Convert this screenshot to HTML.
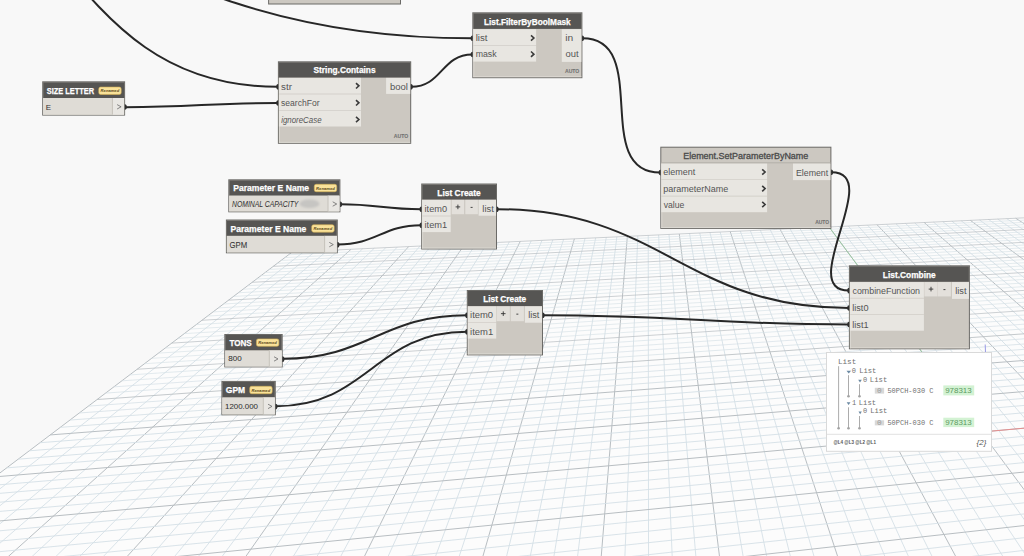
<!DOCTYPE html><html><head><meta charset="utf-8"><style>html,body{margin:0;padding:0;width:1024px;height:556px;overflow:hidden;background:#f8f8f8}svg{display:block}</style></head><body><svg width="1024" height="556" viewBox="0 0 1024 556">
<rect x="0.00" y="0.00" width="1024.00" height="556.00" fill="#f8f8f8" />
<defs><filter id="gb" x="0" y="0" width="1024" height="556" filterUnits="userSpaceOnUse"><feGaussianBlur stdDeviation="0.4"/></filter></defs><g filter="url(#gb)">
<path d="M292.23 252.04L1270.85 206.33L4372.56 1317.90L2025.63 3465.48L-3942.93 3453.07Z" fill="#fcfcfc"/>
<path d="M304.10 251.48L-3799.37 3453.37M315.91 250.93L-3655.80 3453.67M327.68 250.38L-3512.23 3453.97M339.39 249.83L-3368.67 3454.27M362.67 248.75L-3081.53 3454.86M374.24 248.21L-2937.96 3455.16M385.75 247.67L-2794.40 3455.46M397.22 247.13L-2650.83 3455.76M420.01 246.07L-2363.70 3456.36M431.34 245.54L-2220.13 3456.65M442.62 245.01L-2076.56 3456.95M453.85 244.49L-1932.99 3457.25M476.17 243.45L-1645.86 3457.85M487.26 242.93L-1502.29 3458.15M498.30 242.41L-1358.73 3458.45M509.30 241.90L-1215.16 3458.74M531.16 240.88L-928.02 3459.34M542.02 240.37L-784.46 3459.64M552.84 239.87L-640.89 3459.94M563.62 239.36L-497.32 3460.24M585.04 238.36L-210.19 3460.83M595.68 237.86L-66.62 3461.13M606.28 237.37L76.95 3461.43M616.84 236.88L220.51 3461.73M637.82 235.90L507.65 3462.33M648.25 235.41L651.21 3462.62M658.64 234.92L794.78 3462.92M668.99 234.44L938.35 3463.22M689.56 233.48L1225.48 3463.82M699.78 233.00L1369.05 3464.12M709.96 232.53L1512.62 3464.41M720.10 232.05L1656.18 3464.71M740.27 231.11L1943.32 3465.31M750.29 230.64L2070.04 3424.84M760.27 230.18L2170.17 3333.22M770.22 229.71L2265.08 3246.37M789.99 228.79L2440.83 3085.54M799.81 228.33L2522.35 3010.95M809.60 227.87L2600.02 2939.88M819.35 227.42L2674.12 2872.07M838.74 226.51L2812.54 2745.41M848.38 226.06L2877.28 2686.17M857.98 225.61L2939.29 2629.43M867.54 225.17L2998.74 2575.03M886.56 224.28L3110.57 2472.70M896.01 223.84L3163.22 2424.52M905.43 223.40L3213.86 2378.18M914.81 222.96L3262.62 2333.57M933.47 222.09L3354.84 2249.17M942.74 221.65L3398.50 2209.22M951.98 221.22L3440.65 2170.66M961.19 220.79L3481.35 2133.41M979.49 219.94L3558.71 2062.62M988.59 219.51L3595.50 2028.96M997.66 219.09L3631.11 1996.37M1006.69 218.67L3665.60 1964.81M1024.66 217.83L3731.42 1904.58M1033.59 217.41L3762.85 1875.82M1042.49 216.99L3793.34 1847.92M1051.36 216.58L3822.94 1820.83M1068.99 215.76L3879.62 1768.97M1077.76 215.35L3906.77 1744.12M1086.49 214.94L3933.18 1719.96M1095.20 214.53L3958.86 1696.46M1112.51 213.72L4008.18 1651.33M1121.12 213.32L4031.87 1629.65M1129.69 212.92L4054.95 1608.53M1138.24 212.52L4077.45 1587.95M1155.24 211.73L4120.76 1548.32M1163.69 211.33L4141.61 1529.23M1172.11 210.94L4161.96 1510.61M1180.50 210.55L4181.83 1492.43M1197.20 209.77L4220.16 1457.36M1205.50 209.38L4238.66 1440.43M1213.77 208.99L4256.74 1423.89M1222.01 208.61L4274.40 1407.72M1238.41 207.84L4308.57 1376.46M1246.56 207.46L4325.09 1361.34M1254.69 207.08L4341.26 1346.55M1262.78 206.71L4357.08 1332.07" stroke="#d5e0e6" stroke-width="0.9" fill="none"/>
<path d="M292.23 252.04L-3942.93 3453.07M351.06 249.29L-3225.10 3454.57M408.64 246.60L-2507.26 3456.06M465.03 243.97L-1789.43 3457.55M520.25 241.39L-1071.59 3459.04M574.35 238.86L-353.76 3460.53M627.35 236.39L364.08 3462.03M679.29 233.96L1081.92 3463.52M730.21 231.58L1799.75 3465.01M780.12 229.25L2355.19 3163.92M829.07 226.96L2744.89 2807.32M877.07 224.72L3055.78 2522.83M924.16 222.52L3309.58 2290.59M970.36 220.36L3520.68 2097.42M1015.69 218.25L3699.02 1934.23M1060.19 216.17L3851.69 1794.53M1103.87 214.13L3983.85 1673.59M1146.75 212.13L4099.37 1567.88M1188.87 210.16L4201.22 1474.69M1230.22 208.23L4291.68 1391.91M1270.85 206.33L4372.56 1317.90" stroke="#b8bec2" stroke-width="1.0" fill="none"/>
<path d="M292.23 252.04L1270.85 206.33" stroke="#b8bec2" stroke-width="1.00" stroke-opacity="0.70" fill="none"/>
<path d="M288.59 254.79L1276.08 208.20" stroke="#d5e0e6" stroke-width="0.90" stroke-opacity="0.70" fill="none"/>
<path d="M284.88 257.59L1281.40 210.11" stroke="#d5e0e6" stroke-width="0.90" stroke-opacity="0.70" fill="none"/>
<path d="M281.09 260.46L1286.81 212.05" stroke="#d5e0e6" stroke-width="0.90" stroke-opacity="0.70" fill="none"/>
<path d="M277.22 263.38L1292.31 214.02" stroke="#d5e0e6" stroke-width="0.90" stroke-opacity="0.70" fill="none"/>
<path d="M273.27 266.37L1297.91 216.03" stroke="#b8bec2" stroke-width="1.00" stroke-opacity="0.70" fill="none"/>
<path d="M269.23 269.42L1303.61 218.07" stroke="#d5e0e6" stroke-width="0.90" stroke-opacity="0.70" fill="none"/>
<path d="M265.11 272.54L1309.41 220.15" stroke="#d5e0e6" stroke-width="0.90" stroke-opacity="0.70" fill="none"/>
<path d="M260.89 275.73L1315.31 222.26" stroke="#d5e0e6" stroke-width="0.90" stroke-opacity="0.70" fill="none"/>
<path d="M256.58 278.98L1321.32 224.41" stroke="#d5e0e6" stroke-width="0.90" stroke-opacity="0.70" fill="none"/>
<path d="M252.17 282.31L1327.43 226.61" stroke="#b8bec2" stroke-width="1.00" stroke-opacity="0.70" fill="none"/>
<path d="M247.66 285.72L1333.66 228.84" stroke="#d5e0e6" stroke-width="0.90" stroke-opacity="0.70" fill="none"/>
<path d="M243.05 289.21L1340.00 231.11" stroke="#d5e0e6" stroke-width="0.90" stroke-opacity="0.70" fill="none"/>
<path d="M238.33 292.77L1346.47 233.43" stroke="#d5e0e6" stroke-width="0.90" stroke-opacity="0.70" fill="none"/>
<path d="M233.50 296.42L1353.05 235.79" stroke="#d5e0e6" stroke-width="0.90" stroke-opacity="0.70" fill="none"/>
<path d="M228.56 300.16L1359.76 238.19" stroke="#b8bec2" stroke-width="1.00" stroke-opacity="0.70" fill="none"/>
<path d="M223.49 303.99L1366.60 240.64" stroke="#d5e0e6" stroke-width="0.90" stroke-opacity="0.70" fill="none"/>
<path d="M218.31 307.91L1373.57 243.14" stroke="#d5e0e6" stroke-width="0.90" stroke-opacity="0.70" fill="none"/>
<path d="M212.99 311.93L1380.68 245.69" stroke="#d5e0e6" stroke-width="0.90" stroke-opacity="0.70" fill="none"/>
<path d="M207.54 316.05L1387.93 248.28" stroke="#d5e0e6" stroke-width="0.90" stroke-opacity="0.70" fill="none"/>
<path d="M201.95 320.27L1395.32 250.93" stroke="#b8bec2" stroke-width="1.00" stroke-opacity="0.70" fill="none"/>
<path d="M196.22 324.61L1402.86 253.64" stroke="#d5e0e6" stroke-width="0.90" stroke-opacity="0.70" fill="none"/>
<path d="M190.34 329.05L1410.56 256.40" stroke="#d5e0e6" stroke-width="0.90" stroke-opacity="0.70" fill="none"/>
<path d="M184.30 333.61L1418.41 259.21" stroke="#d5e0e6" stroke-width="0.90" stroke-opacity="0.70" fill="none"/>
<path d="M178.10 338.30L1426.43 262.08" stroke="#d5e0e6" stroke-width="0.90" stroke-opacity="0.70" fill="none"/>
<path d="M171.74 343.11L1434.62 265.02" stroke="#b8bec2" stroke-width="1.00" stroke-opacity="0.70" fill="none"/>
<path d="M165.20 348.05L1442.98 268.01" stroke="#d5e0e6" stroke-width="0.90" stroke-opacity="0.70" fill="none"/>
<path d="M158.47 353.13L1451.52 271.07" stroke="#d5e0e6" stroke-width="0.90" stroke-opacity="0.70" fill="none"/>
<path d="M151.56 358.36L1460.24 274.20" stroke="#d5e0e6" stroke-width="0.90" stroke-opacity="0.70" fill="none"/>
<path d="M144.45 363.73L1469.16 277.40" stroke="#d5e0e6" stroke-width="0.90" stroke-opacity="0.70" fill="none"/>
<path d="M137.13 369.26L1478.28 280.66" stroke="#b8bec2" stroke-width="1.00" stroke-opacity="0.70" fill="none"/>
<path d="M129.60 374.96L1487.60 284.00" stroke="#d5e0e6" stroke-width="0.90" stroke-opacity="0.73" fill="none"/>
<path d="M121.84 380.82L1497.13 287.42" stroke="#d5e0e6" stroke-width="0.90" stroke-opacity="0.75" fill="none"/>
<path d="M113.85 386.86L1506.88 290.92" stroke="#d5e0e6" stroke-width="0.90" stroke-opacity="0.78" fill="none"/>
<path d="M105.61 393.09L1516.86 294.49" stroke="#d5e0e6" stroke-width="0.90" stroke-opacity="0.81" fill="none"/>
<path d="M97.11 399.52L1527.07 298.15" stroke="#b8bec2" stroke-width="1.00" stroke-opacity="0.83" fill="none"/>
<path d="M88.34 406.14L1537.52 301.90" stroke="#d5e0e6" stroke-width="0.90" stroke-opacity="0.86" fill="none"/>
<path d="M79.28 412.99L1548.23 305.73" stroke="#d5e0e6" stroke-width="0.90" stroke-opacity="0.89" fill="none"/>
<path d="M69.93 420.06L1559.20 309.66" stroke="#d5e0e6" stroke-width="0.90" stroke-opacity="0.93" fill="none"/>
<path d="M60.27 427.36L1570.44 313.69" stroke="#d5e0e6" stroke-width="0.90" stroke-opacity="0.96" fill="none"/>
<path d="M50.28 434.91L1581.96 317.82" stroke="#b8bec2" stroke-width="1.00" stroke-opacity="0.99" fill="none"/>
<path d="M39.94 442.73L1593.77 322.05" stroke="#d5e0e6" stroke-width="0.90" stroke-opacity="1.00" fill="none"/>
<path d="M29.24 450.81L1605.88 326.39" stroke="#d5e0e6" stroke-width="0.90" stroke-opacity="1.00" fill="none"/>
<path d="M18.15 459.19L1618.30 330.85" stroke="#d5e0e6" stroke-width="0.90" stroke-opacity="1.00" fill="none"/>
<path d="M6.66 467.88L1631.06 335.42" stroke="#d5e0e6" stroke-width="0.90" stroke-opacity="1.00" fill="none"/>
<path d="M-5.26 476.88L1644.15 340.11" stroke="#b8bec2" stroke-width="1.00" stroke-opacity="1.00" fill="none"/>
<path d="M-17.62 486.23L1657.60 344.93" stroke="#d5e0e6" stroke-width="0.90" stroke-opacity="1.00" fill="none"/>
<path d="M-30.47 495.94L1671.41 349.88" stroke="#d5e0e6" stroke-width="0.90" stroke-opacity="1.00" fill="none"/>
<path d="M-43.82 506.03L1685.61 354.97" stroke="#d5e0e6" stroke-width="0.90" stroke-opacity="1.00" fill="none"/>
<path d="M-57.71 516.53L1700.21 360.20" stroke="#d5e0e6" stroke-width="0.90" stroke-opacity="1.00" fill="none"/>
<path d="M-72.16 527.45L1715.22 365.58" stroke="#b8bec2" stroke-width="1.00" stroke-opacity="1.00" fill="none"/>
<path d="M-87.22 538.84L1730.67 371.12" stroke="#d5e0e6" stroke-width="0.90" stroke-opacity="1.00" fill="none"/>
<path d="M-102.93 550.71L1746.57 376.81" stroke="#d5e0e6" stroke-width="0.90" stroke-opacity="1.00" fill="none"/>
<path d="M-119.32 563.09L1762.95 382.68" stroke="#d5e0e6" stroke-width="0.90" stroke-opacity="1.00" fill="none"/>
<path d="M-136.44 576.03L1779.82 388.73" stroke="#d5e0e6" stroke-width="0.90" stroke-opacity="1.00" fill="none"/>
<path d="M-154.34 589.57L1797.21 394.96" stroke="#b8bec2" stroke-width="1.00" stroke-opacity="1.00" fill="none"/>
<path d="M-173.08 603.73L1815.15 401.39" stroke="#d5e0e6" stroke-width="0.90" stroke-opacity="1.00" fill="none"/>
<path d="M-192.71 618.57L1833.65 408.02" stroke="#d5e0e6" stroke-width="0.90" stroke-opacity="1.00" fill="none"/>
<path d="M-213.31 634.14L1852.75 414.87" stroke="#d5e0e6" stroke-width="0.90" stroke-opacity="1.00" fill="none"/>
<path d="M-234.94 650.48L1872.47 421.93" stroke="#d5e0e6" stroke-width="0.90" stroke-opacity="1.00" fill="none"/>
<path d="M-257.68 667.68L1892.85 429.24" stroke="#b8bec2" stroke-width="1.00" stroke-opacity="1.00" fill="none"/>
<path d="M-281.63 685.78L1913.92 436.79" stroke="#d5e0e6" stroke-width="0.90" stroke-opacity="1.00" fill="none"/>
<path d="M-306.88 704.86L1935.72 444.60" stroke="#d5e0e6" stroke-width="0.90" stroke-opacity="1.00" fill="none"/>
<path d="M-333.54 725.01L1958.28 452.68" stroke="#d5e0e6" stroke-width="0.90" stroke-opacity="1.00" fill="none"/>
<path d="M-361.73 746.32L1981.64 461.06" stroke="#d5e0e6" stroke-width="0.90" stroke-opacity="1.00" fill="none"/>
<path d="M-391.59 768.88L2005.85 469.73" stroke="#b8bec2" stroke-width="1.00" stroke-opacity="1.00" fill="none"/>
<path d="M-423.26 792.82L2030.96 478.73" stroke="#d5e0e6" stroke-width="0.90" stroke-opacity="1.00" fill="none"/>
<path d="M-456.93 818.27L2057.01 488.07" stroke="#d5e0e6" stroke-width="0.90" stroke-opacity="1.00" fill="none"/>
<path d="M-492.78 845.37L2084.07 497.76" stroke="#d5e0e6" stroke-width="0.90" stroke-opacity="1.00" fill="none"/>
<path d="M-531.04 874.28L2112.18 507.84" stroke="#d5e0e6" stroke-width="0.90" stroke-opacity="1.00" fill="none"/>
<path d="M-571.95 905.21L2141.42 518.32" stroke="#b8bec2" stroke-width="1.00" stroke-opacity="1.00" fill="none"/>
<path d="M-615.81 938.35L2171.84 529.22" stroke="#d5e0e6" stroke-width="0.90" stroke-opacity="1.00" fill="none"/>
<path d="M-662.93 973.97L2203.54 540.58" stroke="#d5e0e6" stroke-width="0.90" stroke-opacity="1.00" fill="none"/>
<path d="M-713.70 1012.34L2236.58 552.42" stroke="#d5e0e6" stroke-width="0.90" stroke-opacity="1.00" fill="none"/>
<path d="M-768.57 1053.81L2271.05 564.77" stroke="#d5e0e6" stroke-width="0.90" stroke-opacity="1.00" fill="none"/>
<path d="M-828.04 1098.76L2307.05 577.68" stroke="#b8bec2" stroke-width="1.00" stroke-opacity="1.00" fill="none"/>
<path d="M-892.72 1147.65L2344.69 591.17" stroke="#d5e0e6" stroke-width="0.90" stroke-opacity="1.00" fill="none"/>
<path d="M-963.34 1201.02L2384.08 605.28" stroke="#d5e0e6" stroke-width="0.90" stroke-opacity="1.00" fill="none"/>
<path d="M-1040.73 1259.52L2425.33 620.06" stroke="#d5e0e6" stroke-width="0.90" stroke-opacity="1.00" fill="none"/>
<path d="M-1125.94 1323.92L2468.60 635.57" stroke="#d5e0e6" stroke-width="0.90" stroke-opacity="1.00" fill="none"/>
<path d="M-1220.20 1395.17L2514.02 651.85" stroke="#b8bec2" stroke-width="1.00" stroke-opacity="1.00" fill="none"/>
<path d="M-1325.04 1474.41L2561.77 668.96" stroke="#d5e0e6" stroke-width="0.90" stroke-opacity="1.00" fill="none"/>
<path d="M-1442.35 1563.07L2612.02 686.97" stroke="#d5e0e6" stroke-width="0.90" stroke-opacity="1.00" fill="none"/>
<path d="M-1574.48 1662.94L2664.99 705.95" stroke="#d5e0e6" stroke-width="0.90" stroke-opacity="1.00" fill="none"/>
<path d="M-1724.46 1776.29L2720.89 725.99" stroke="#d5e0e6" stroke-width="0.90" stroke-opacity="1.00" fill="none"/>
<path d="M-1896.13 1906.05L2779.98 747.16" stroke="#b8bec2" stroke-width="1.00" stroke-opacity="1.00" fill="none"/>
<path d="M-2094.59 2056.05L2842.54 769.58" stroke="#d5e0e6" stroke-width="0.90" stroke-opacity="1.00" fill="none"/>
<path d="M-2326.63 2231.43L2908.88 793.36" stroke="#d5e0e6" stroke-width="0.90" stroke-opacity="1.00" fill="none"/>
<path d="M-2601.56 2439.23L2979.35 818.61" stroke="#d5e0e6" stroke-width="0.90" stroke-opacity="1.00" fill="none"/>
<path d="M-2932.49 2689.35L3054.36 845.49" stroke="#d5e0e6" stroke-width="0.90" stroke-opacity="1.00" fill="none"/>
<path d="M-3338.46 2996.20L3134.36 874.16" stroke="#b8bec2" stroke-width="1.00" stroke-opacity="1.00" fill="none"/>
<path d="M-3848.26 3381.52L3219.86 904.80" stroke="#d5e0e6" stroke-width="0.90" stroke-opacity="1.00" fill="none"/>
<path d="M-3376.55 3454.25L3311.45 937.63" stroke="#d5e0e6" stroke-width="0.90" stroke-opacity="1.00" fill="none"/>
<path d="M-2701.28 3455.65L3409.80 972.87" stroke="#d5e0e6" stroke-width="0.90" stroke-opacity="1.00" fill="none"/>
<path d="M-2026.00 3457.06L3515.70 1010.82" stroke="#d5e0e6" stroke-width="0.90" stroke-opacity="1.00" fill="none"/>
<path d="M-1350.73 3458.46L3630.04 1051.80" stroke="#b8bec2" stroke-width="1.00" stroke-opacity="1.00" fill="none"/>
<path d="M-675.46 3459.87L3753.87 1096.18" stroke="#d5e0e6" stroke-width="0.90" stroke-opacity="1.00" fill="none"/>
<path d="M-0.19 3461.27L3888.44 1144.41" stroke="#d5e0e6" stroke-width="0.90" stroke-opacity="1.00" fill="none"/>
<path d="M675.08 3462.67L4035.20 1197.00" stroke="#d5e0e6" stroke-width="0.90" stroke-opacity="1.00" fill="none"/>
<path d="M1350.36 3464.08L4195.88 1254.58" stroke="#d5e0e6" stroke-width="0.90" stroke-opacity="1.00" fill="none"/>
<path d="M2025.63 3465.48L4372.56 1317.90" stroke="#b8bec2" stroke-width="1.00" stroke-opacity="1.00" fill="none"/>
<path d="M981.33 432.04L829.07 226.96" stroke="#9cc7a2" stroke-width="1" fill="none"/>
<path d="M981.33 432.04L1715.22 365.58" stroke="#e58f8f" stroke-width="1" fill="none"/>
<path d="M985.5 352.5L985.2 344.5" stroke="#9a9ae6" stroke-width="1" fill="none"/>
</g>
<g stroke="#272727" stroke-width="2.0" fill="none"><path d="M-161.20 -166.30C66.87 -166.30 49.83 86.80 277.90 86.80"/><path d="M-353.60 -189.20C31.90 -189.20 86.80 38.30 472.30 38.30"/><path d="M125.10 107.20C193.89 107.20 209.11 103.00 277.90 103.00"/><path d="M411.20 86.80C442.30 86.80 441.20 54.50 472.30 54.50"/><path d="M582.40 38.30C652.27 38.30 590.43 172.60 660.30 172.60"/><path d="M831.40 172.30C885.21 172.30 795.09 290.60 848.90 290.60"/><path d="M340.40 204.20C376.83 204.20 384.77 209.20 421.20 209.20"/><path d="M337.80 244.60C376.32 244.60 382.68 225.30 421.20 225.30"/><path d="M497.00 209.20C661.48 209.20 684.42 308.00 848.90 308.00"/><path d="M282.70 358.80C367.84 358.80 381.66 315.20 466.80 315.20"/><path d="M275.80 406.20C368.04 406.20 374.56 331.80 466.80 331.80"/><path d="M543.00 315.20C680.72 315.20 711.18 324.50 848.90 324.50"/></g>
<rect x="268.10" y="-5.00" width="132.90" height="9.50" fill="#6b6a67" />
<rect x="269.10" y="-5.00" width="130.90" height="8.50" fill="#ccc8c1" />
<rect x="42.20" y="81.30" width="82.90" height="34.30" fill="#6b6a67" />
<rect x="43.20" y="82.30" width="80.90" height="32.30" fill="#ccc8c1" />
<rect x="43.20" y="98.00" width="0.90" height="16.60" fill="#dedbd5" />
<rect x="43.20" y="113.70" width="80.90" height="0.90" fill="#dedbd5" />
<rect x="43.20" y="82.30" width="80.90" height="15.70" fill="#565553" />
<rect x="43.20" y="98.00" width="80.90" height="16.60" fill="#dfdcd6" />
<rect x="112.50" y="98.00" width="11.60" height="16.60" fill="#e9e7e3" />
<rect x="111.90" y="98.00" width="1.00" height="16.60" fill="#c6c2bb" />
<text x="46.72" y="93.90" font-size="9.28" font-weight="bold" font-style="normal" font-family='"Liberation Sans",sans-serif' fill="#ffffff" stroke="#ffffff" stroke-width="0.25" textLength="47.45" lengthAdjust="spacingAndGlyphs">SIZE LETTER</text>
<rect x="98.78" y="87.08" width="22.40" height="7.40" rx="1.8" fill="#f9e29a" stroke="#d4b054" stroke-width="0.6"/>
<text x="100.60" y="92.38" font-size="4.13" font-weight="bold" font-style="italic" font-family='"Liberation Sans",sans-serif' fill="#5c4a1c" textLength="18.61" lengthAdjust="spacingAndGlyphs">Renamed</text>
<text x="45.66" y="109.70" font-size="7.97" font-weight="normal" font-style="normal" font-family='"Liberation Sans",sans-serif' fill="#333333" stroke="#333333" stroke-width="0.05">E</text>
<path d="M117.10 104.60L121.10 106.80L117.10 109.00" stroke="#6a6a6a" stroke-width="0.8" fill="none"/>
<path d="M124.80 104.20A2 2.8 0 0 1 124.80 109.80Z" fill="#2e2e2e"/>
<rect x="228.30" y="179.30" width="112.10" height="33.00" fill="#6b6a67" />
<rect x="229.30" y="180.30" width="110.10" height="31.00" fill="#ccc8c1" />
<rect x="229.30" y="195.70" width="0.90" height="15.60" fill="#dedbd5" />
<rect x="229.30" y="210.40" width="110.10" height="0.90" fill="#dedbd5" />
<rect x="229.30" y="180.30" width="110.10" height="15.40" fill="#565553" />
<rect x="229.30" y="195.70" width="110.10" height="15.60" fill="#dfdcd6" />
<rect x="328.10" y="195.70" width="11.30" height="15.60" fill="#e9e7e3" />
<rect x="327.50" y="195.70" width="1.00" height="15.60" fill="#c6c2bb" />
<text x="233.20" y="191.20" font-size="9.28" font-weight="bold" font-style="normal" font-family='"Liberation Sans",sans-serif' fill="#ffffff" stroke="#ffffff" stroke-width="0.25" textLength="75.89" lengthAdjust="spacingAndGlyphs">Parameter E Name</text>
<rect x="314.30" y="184.30" width="22.40" height="7.40" rx="1.8" fill="#f9e29a" stroke="#d4b054" stroke-width="0.6"/>
<text x="316.12" y="189.60" font-size="4.13" font-weight="bold" font-style="italic" font-family='"Liberation Sans",sans-serif' fill="#5c4a1c" textLength="18.61" lengthAdjust="spacingAndGlyphs">Renamed</text>
<text x="232.03" y="206.70" font-size="8.84" font-weight="normal" font-style="italic" font-family='"Liberation Sans",sans-serif' fill="#333333" stroke="#333333" stroke-width="0.05" textLength="66.32" lengthAdjust="spacingAndGlyphs">NOMINAL CAPACITY</text>
<path d="M332.70 201.80L336.70 204.00L332.70 206.20" stroke="#6a6a6a" stroke-width="0.8" fill="none"/>
<path d="M340.10 201.40A2 2.8 0 0 1 340.10 207.00Z" fill="#2e2e2e"/>
<defs><filter id="bl" x="-50%" y="-50%" width="200%" height="200%"><feGaussianBlur stdDeviation="1.2"/></filter></defs><ellipse cx="309.5" cy="203.8" rx="10" ry="4.3" fill="#c6c5c2" filter="url(#bl)"/>
<rect x="225.90" y="219.50" width="111.90" height="33.80" fill="#6b6a67" />
<rect x="226.90" y="220.50" width="109.90" height="31.80" fill="#ccc8c1" />
<rect x="226.90" y="235.90" width="0.90" height="16.40" fill="#dedbd5" />
<rect x="226.90" y="251.40" width="109.90" height="0.90" fill="#dedbd5" />
<rect x="226.90" y="220.50" width="109.90" height="15.40" fill="#565553" />
<rect x="226.90" y="235.90" width="109.90" height="16.40" fill="#dfdcd6" />
<rect x="324.70" y="235.90" width="12.10" height="16.40" fill="#e9e7e3" />
<rect x="324.10" y="235.90" width="1.00" height="16.40" fill="#c6c2bb" />
<text x="230.50" y="231.80" font-size="9.28" font-weight="bold" font-style="normal" font-family='"Liberation Sans",sans-serif' fill="#ffffff" stroke="#ffffff" stroke-width="0.25" textLength="75.89" lengthAdjust="spacingAndGlyphs">Parameter E Name</text>
<rect x="311.75" y="224.75" width="22.40" height="7.40" rx="1.8" fill="#f9e29a" stroke="#d4b054" stroke-width="0.6"/>
<text x="313.57" y="230.05" font-size="4.13" font-weight="bold" font-style="italic" font-family='"Liberation Sans",sans-serif' fill="#5c4a1c" textLength="18.61" lengthAdjust="spacingAndGlyphs">Renamed</text>
<text x="229.56" y="247.60" font-size="8.84" font-weight="normal" font-style="normal" font-family='"Liberation Sans",sans-serif' fill="#333333" stroke="#333333" stroke-width="0.05" textLength="17.73" lengthAdjust="spacingAndGlyphs">GPM</text>
<path d="M329.30 242.40L333.30 244.60L329.30 246.80" stroke="#6a6a6a" stroke-width="0.8" fill="none"/>
<path d="M337.50 242.00A2 2.8 0 0 1 337.50 247.60Z" fill="#2e2e2e"/>
<rect x="224.30" y="334.00" width="58.40" height="33.40" fill="#6b6a67" />
<rect x="225.30" y="335.00" width="56.40" height="31.40" fill="#ccc8c1" />
<rect x="225.30" y="350.50" width="0.90" height="15.90" fill="#dedbd5" />
<rect x="225.30" y="365.50" width="56.40" height="0.90" fill="#dedbd5" />
<rect x="225.30" y="335.00" width="56.40" height="15.50" fill="#565553" />
<rect x="225.30" y="350.50" width="56.40" height="15.90" fill="#dfdcd6" />
<rect x="269.40" y="350.50" width="12.30" height="15.90" fill="#e9e7e3" />
<rect x="268.80" y="350.50" width="1.00" height="15.90" fill="#c6c2bb" />
<text x="229.41" y="345.80" font-size="8.55" font-weight="bold" font-style="normal" font-family='"Liberation Sans",sans-serif' fill="#ffffff" stroke="#ffffff" stroke-width="0.25" textLength="22.36" lengthAdjust="spacingAndGlyphs">TONS</text>
<rect x="256.45" y="338.90" width="22.40" height="7.40" rx="1.8" fill="#f9e29a" stroke="#d4b054" stroke-width="0.6"/>
<text x="258.27" y="344.20" font-size="4.13" font-weight="bold" font-style="italic" font-family='"Liberation Sans",sans-serif' fill="#5c4a1c" textLength="18.61" lengthAdjust="spacingAndGlyphs">Renamed</text>
<text x="228.25" y="360.80" font-size="7.68" font-weight="normal" font-style="normal" font-family='"Liberation Sans",sans-serif' fill="#333333" stroke="#333333" stroke-width="0.05" textLength="13.47" lengthAdjust="spacingAndGlyphs">800</text>
<path d="M274.00 356.75L278.00 358.95L274.00 361.15" stroke="#6a6a6a" stroke-width="0.8" fill="none"/>
<path d="M282.40 356.35A2 2.8 0 0 1 282.40 361.95Z" fill="#2e2e2e"/>
<rect x="221.40" y="380.90" width="54.40" height="34.40" fill="#6b6a67" />
<rect x="222.40" y="381.90" width="52.40" height="32.40" fill="#ccc8c1" />
<rect x="222.40" y="397.50" width="0.90" height="16.80" fill="#dedbd5" />
<rect x="222.40" y="413.40" width="52.40" height="0.90" fill="#dedbd5" />
<rect x="222.40" y="381.90" width="52.40" height="15.60" fill="#565553" />
<rect x="222.40" y="397.50" width="52.40" height="16.80" fill="#dfdcd6" />
<rect x="263.40" y="397.50" width="11.40" height="16.80" fill="#e9e7e3" />
<rect x="262.80" y="397.50" width="1.00" height="16.80" fill="#c6c2bb" />
<text x="225.86" y="393.00" font-size="8.41" font-weight="bold" font-style="normal" font-family='"Liberation Sans",sans-serif' fill="#ffffff" stroke="#ffffff" stroke-width="0.25" textLength="19.31" lengthAdjust="spacingAndGlyphs">GPM</text>
<rect x="249.75" y="386.30" width="22.40" height="7.40" rx="1.8" fill="#f9e29a" stroke="#d4b054" stroke-width="0.6"/>
<text x="251.57" y="391.60" font-size="4.13" font-weight="bold" font-style="italic" font-family='"Liberation Sans",sans-serif' fill="#5c4a1c" textLength="18.61" lengthAdjust="spacingAndGlyphs">Renamed</text>
<text x="225.02" y="408.50" font-size="7.68" font-weight="normal" font-style="normal" font-family='"Liberation Sans",sans-serif' fill="#333333" stroke="#333333" stroke-width="0.05" textLength="32.98" lengthAdjust="spacingAndGlyphs">1200.000</text>
<path d="M268.00 404.20L272.00 406.40L268.00 408.60" stroke="#6a6a6a" stroke-width="0.8" fill="none"/>
<path d="M275.50 403.80A2 2.8 0 0 1 275.50 409.40Z" fill="#2e2e2e"/>
<rect x="277.90" y="61.30" width="133.30" height="82.50" fill="#6b6a67" />
<rect x="278.90" y="62.30" width="131.30" height="80.50" fill="#ccc8c1" />
<rect x="278.90" y="77.60" width="0.90" height="65.20" fill="#dedbd5" />
<rect x="278.90" y="141.90" width="131.30" height="0.90" fill="#dedbd5" />
<rect x="278.90" y="62.30" width="131.30" height="15.30" fill="#565553" />
<rect x="278.90" y="77.90" width="82.10" height="15.80" fill="#e8e6e1" />
<rect x="278.90" y="94.30" width="82.10" height="15.80" fill="#e8e6e1" />
<rect x="278.90" y="93.70" width="82.10" height="0.60" fill="#d9d6d0" />
<rect x="278.90" y="110.70" width="82.10" height="15.80" fill="#e8e6e1" />
<rect x="278.90" y="110.10" width="82.10" height="0.60" fill="#d9d6d0" />
<rect x="386.10" y="77.90" width="24.10" height="16.00" fill="#e8e6e1" />
<text x="313.53" y="72.70" font-size="8.84" font-weight="bold" font-style="normal" font-family='"Liberation Sans",sans-serif' fill="#fff" stroke="#fff" stroke-width="0.25" textLength="62.08" lengthAdjust="spacingAndGlyphs">String.Contains</text>
<text x="281.05" y="89.80" font-size="8.41" font-weight="normal" font-style="normal" font-family='"Liberation Sans",sans-serif' fill="#555555" textLength="10.85" lengthAdjust="spacingAndGlyphs">str</text>
<text x="281.05" y="106.00" font-size="8.41" font-weight="normal" font-style="normal" font-family='"Liberation Sans",sans-serif' fill="#555555" textLength="38.50" lengthAdjust="spacingAndGlyphs">searchFor</text>
<text x="281.17" y="122.60" font-size="8.41" font-weight="normal" font-style="italic" font-family='"Liberation Sans",sans-serif' fill="#555555" textLength="40.39" lengthAdjust="spacingAndGlyphs">ignoreCase</text>
<text x="389.95" y="89.60" font-size="8.41" font-weight="normal" font-style="normal" font-family='"Liberation Sans",sans-serif' fill="#555555" textLength="17.94" lengthAdjust="spacingAndGlyphs">bool</text>
<path d="M356.00 83.10L358.90 85.80L356.00 88.50" stroke="#3a3a3a" stroke-width="1.6" fill="none" stroke-linejoin="miter"/>
<path d="M356.00 100.10L358.90 102.80L356.00 105.50" stroke="#3a3a3a" stroke-width="1.6" fill="none" stroke-linejoin="miter"/>
<path d="M356.00 116.80L358.90 119.50L356.00 122.20" stroke="#3a3a3a" stroke-width="1.6" fill="none" stroke-linejoin="miter"/>
<text x="393.76" y="138.40" font-size="5.65" font-weight="bold" font-style="normal" font-family='"Liberation Sans",sans-serif' fill="#727272" stroke="#727272" stroke-width="0.10" textLength="14.46" lengthAdjust="spacingAndGlyphs">AUTO</text>
<path d="M278.20 84.00A2 2.8 0 0 0 278.20 89.60Z" fill="#2e2e2e"/>
<path d="M278.20 100.20A2 2.8 0 0 0 278.20 105.80Z" fill="#2e2e2e"/>
<path d="M410.90 84.00A2 2.8 0 0 1 410.90 89.60Z" fill="#2e2e2e"/>
<rect x="472.30" y="12.30" width="110.10" height="65.90" fill="#6b6a67" />
<rect x="473.30" y="13.30" width="108.10" height="63.90" fill="#ccc8c1" />
<rect x="473.30" y="28.90" width="0.90" height="48.30" fill="#dedbd5" />
<rect x="473.30" y="76.30" width="108.10" height="0.90" fill="#dedbd5" />
<rect x="473.30" y="13.30" width="108.10" height="15.60" fill="#565553" />
<rect x="473.30" y="29.20" width="62.80" height="15.90" fill="#e8e6e1" />
<rect x="473.30" y="45.70" width="62.80" height="15.90" fill="#e8e6e1" />
<rect x="473.30" y="45.10" width="62.80" height="0.60" fill="#d9d6d0" />
<rect x="561.80" y="29.20" width="19.60" height="32.70" fill="#e8e6e1" />
<text x="484.02" y="24.60" font-size="8.99" font-weight="bold" font-style="normal" font-family='"Liberation Sans",sans-serif' fill="#fff" stroke="#fff" stroke-width="0.25" textLength="86.65" lengthAdjust="spacingAndGlyphs">List.FilterByBoolMask</text>
<text x="475.65" y="40.60" font-size="8.41" font-weight="normal" font-style="normal" font-family='"Liberation Sans",sans-serif' fill="#555555" textLength="11.80" lengthAdjust="spacingAndGlyphs">list</text>
<text x="475.65" y="57.20" font-size="8.41" font-weight="normal" font-style="normal" font-family='"Liberation Sans",sans-serif' fill="#555555" textLength="20.96" lengthAdjust="spacingAndGlyphs">mask</text>
<text x="565.25" y="40.60" font-size="8.41" font-weight="normal" font-style="normal" font-family='"Liberation Sans",sans-serif' fill="#555555" textLength="7.96" lengthAdjust="spacingAndGlyphs">in</text>
<text x="565.46" y="57.20" font-size="8.41" font-weight="normal" font-style="normal" font-family='"Liberation Sans",sans-serif' fill="#555555" textLength="13.07" lengthAdjust="spacingAndGlyphs">out</text>
<path d="M531.00 35.30L533.90 38.00L531.00 40.70" stroke="#3a3a3a" stroke-width="1.6" fill="none" stroke-linejoin="miter"/>
<path d="M531.00 51.50L533.90 54.20L531.00 56.90" stroke="#3a3a3a" stroke-width="1.6" fill="none" stroke-linejoin="miter"/>
<text x="564.96" y="72.80" font-size="5.65" font-weight="bold" font-style="normal" font-family='"Liberation Sans",sans-serif' fill="#727272" stroke="#727272" stroke-width="0.10" textLength="14.36" lengthAdjust="spacingAndGlyphs">AUTO</text>
<path d="M472.60 35.50A2 2.8 0 0 0 472.60 41.10Z" fill="#2e2e2e"/>
<path d="M472.60 51.70A2 2.8 0 0 0 472.60 57.30Z" fill="#2e2e2e"/>
<path d="M582.10 35.50A2 2.8 0 0 1 582.10 41.10Z" fill="#2e2e2e"/>
<rect x="660.30" y="146.70" width="171.10" height="82.20" fill="#6b6a67" />
<rect x="661.30" y="147.70" width="169.10" height="80.20" fill="#ccc8c1" />
<rect x="661.30" y="163.30" width="0.90" height="64.60" fill="#dedbd5" />
<rect x="661.30" y="227.00" width="169.10" height="0.90" fill="#dedbd5" />
<rect x="661.30" y="162.30" width="169.10" height="1.00" fill="#b3afa8" />
<rect x="661.30" y="163.60" width="105.80" height="15.80" fill="#e8e6e1" />
<rect x="661.30" y="180.00" width="105.80" height="15.80" fill="#e8e6e1" />
<rect x="661.30" y="179.40" width="105.80" height="0.60" fill="#d9d6d0" />
<rect x="661.30" y="196.40" width="105.80" height="15.80" fill="#e8e6e1" />
<rect x="661.30" y="195.80" width="105.80" height="0.60" fill="#d9d6d0" />
<rect x="793.00" y="163.60" width="37.40" height="16.50" fill="#e8e6e1" />
<text x="683.19" y="159.00" font-size="8.84" font-weight="normal" font-style="normal" font-family='"Liberation Sans",sans-serif' fill="#4a4a4a" stroke="#4a4a4a" stroke-width="0.30" textLength="125.13" lengthAdjust="spacingAndGlyphs">Element.SetParameterByName</text>
<text x="663.36" y="175.30" font-size="8.41" font-weight="normal" font-style="normal" font-family='"Liberation Sans",sans-serif' fill="#555555" textLength="31.93" lengthAdjust="spacingAndGlyphs">element</text>
<text x="663.15" y="191.90" font-size="8.41" font-weight="normal" font-style="normal" font-family='"Liberation Sans",sans-serif' fill="#555555" textLength="65.09" lengthAdjust="spacingAndGlyphs">parameterName</text>
<text x="663.66" y="207.90" font-size="8.41" font-weight="normal" font-style="normal" font-family='"Liberation Sans",sans-serif' fill="#555555" textLength="20.64" lengthAdjust="spacingAndGlyphs">value</text>
<text x="795.93" y="175.60" font-size="8.41" font-weight="normal" font-style="normal" font-family='"Liberation Sans",sans-serif' fill="#555555" textLength="32.28" lengthAdjust="spacingAndGlyphs">Element</text>
<path d="M762.20 169.30L765.10 172.00L762.20 174.70" stroke="#3a3a3a" stroke-width="1.6" fill="none" stroke-linejoin="miter"/>
<path d="M762.20 185.90L765.10 188.60L762.20 191.30" stroke="#3a3a3a" stroke-width="1.6" fill="none" stroke-linejoin="miter"/>
<path d="M762.20 201.80L765.10 204.50L762.20 207.20" stroke="#3a3a3a" stroke-width="1.6" fill="none" stroke-linejoin="miter"/>
<text x="815.16" y="224.30" font-size="5.65" font-weight="bold" font-style="normal" font-family='"Liberation Sans",sans-serif' fill="#727272" stroke="#727272" stroke-width="0.10" textLength="13.95" lengthAdjust="spacingAndGlyphs">AUTO</text>
<path d="M660.60 169.80A2 2.8 0 0 0 660.60 175.40Z" fill="#2e2e2e"/>
<path d="M831.10 169.50A2 2.8 0 0 1 831.10 175.10Z" fill="#2e2e2e"/>
<rect x="421.20" y="183.50" width="75.80" height="66.00" fill="#6b6a67" />
<rect x="422.20" y="184.50" width="73.80" height="64.00" fill="#ccc8c1" />
<rect x="422.20" y="199.60" width="0.90" height="48.90" fill="#dedbd5" />
<rect x="422.20" y="247.60" width="73.80" height="0.90" fill="#dedbd5" />
<rect x="422.20" y="184.50" width="73.80" height="15.10" fill="#565553" />
<rect x="422.20" y="199.90" width="28.50" height="15.80" fill="#e8e6e1" />
<rect x="422.20" y="216.30" width="28.50" height="15.80" fill="#e8e6e1" />
<rect x="422.20" y="215.70" width="28.50" height="0.60" fill="#d9d6d0" />
<text x="437.33" y="195.60" font-size="8.70" font-weight="bold" font-style="normal" font-family='"Liberation Sans",sans-serif' fill="#fff" stroke="#fff" stroke-width="0.25" textLength="43.37" lengthAdjust="spacingAndGlyphs">List Create</text>
<text x="424.55" y="211.70" font-size="8.41" font-weight="normal" font-style="normal" font-family='"Liberation Sans",sans-serif' fill="#555555" textLength="22.52" lengthAdjust="spacingAndGlyphs">item0</text>
<text x="424.55" y="228.10" font-size="8.41" font-weight="normal" font-style="normal" font-family='"Liberation Sans",sans-serif' fill="#555555" textLength="22.62" lengthAdjust="spacingAndGlyphs">item1</text>
<rect x="451.70" y="199.90" width="12.40" height="14.30" fill="#e3e0db" />
<rect x="465.30" y="199.90" width="12.60" height="14.30" fill="#e3e0db" />
<rect x="478.60" y="199.90" width="17.40" height="15.80" fill="#e8e6e1" />
<path d="M455.60 206.90H460.20M457.90 204.60V209.20" stroke="#333" stroke-width="0.9"/>
<path d="M470.60 207.40H472.60" stroke="#333" stroke-width="0.9"/>
<text x="482.35" y="211.70" font-size="8.41" font-weight="normal" font-style="normal" font-family='"Liberation Sans",sans-serif' fill="#555555" textLength="11.48" lengthAdjust="spacingAndGlyphs">list</text>
<path d="M421.50 206.40A2 2.8 0 0 0 421.50 212.00Z" fill="#2e2e2e"/>
<path d="M421.50 222.50A2 2.8 0 0 0 421.50 228.10Z" fill="#2e2e2e"/>
<path d="M496.70 206.40A2 2.8 0 0 1 496.70 212.00Z" fill="#2e2e2e"/>
<rect x="466.80" y="290.00" width="76.20" height="65.40" fill="#6b6a67" />
<rect x="467.80" y="291.00" width="74.20" height="63.40" fill="#ccc8c1" />
<rect x="467.80" y="306.10" width="0.90" height="48.30" fill="#dedbd5" />
<rect x="467.80" y="353.50" width="74.20" height="0.90" fill="#dedbd5" />
<rect x="467.80" y="291.00" width="74.20" height="15.10" fill="#565553" />
<rect x="467.80" y="306.40" width="28.40" height="15.80" fill="#e8e6e1" />
<rect x="467.80" y="322.80" width="28.40" height="15.80" fill="#e8e6e1" />
<rect x="467.80" y="322.20" width="28.40" height="0.60" fill="#d9d6d0" />
<text x="483.14" y="301.90" font-size="8.55" font-weight="bold" font-style="normal" font-family='"Liberation Sans",sans-serif' fill="#fff" stroke="#fff" stroke-width="0.25" textLength="43.06" lengthAdjust="spacingAndGlyphs">List Create</text>
<text x="470.05" y="318.20" font-size="8.41" font-weight="normal" font-style="normal" font-family='"Liberation Sans",sans-serif' fill="#555555" textLength="23.05" lengthAdjust="spacingAndGlyphs">item0</text>
<text x="470.05" y="334.80" font-size="8.41" font-weight="normal" font-style="normal" font-family='"Liberation Sans",sans-serif' fill="#555555" textLength="23.14" lengthAdjust="spacingAndGlyphs">item1</text>
<rect x="496.70" y="306.40" width="13.10" height="14.80" fill="#e3e0db" />
<rect x="510.80" y="306.40" width="13.10" height="14.80" fill="#e3e0db" />
<rect x="524.90" y="306.40" width="17.10" height="16.30" fill="#e8e6e1" />
<path d="M500.95 313.65H505.55M503.25 311.35V315.95" stroke="#333" stroke-width="0.9"/>
<path d="M516.35 314.15H518.35" stroke="#333" stroke-width="0.9"/>
<text x="528.15" y="318.20" font-size="8.41" font-weight="normal" font-style="normal" font-family='"Liberation Sans",sans-serif' fill="#555555" textLength="11.27" lengthAdjust="spacingAndGlyphs">list</text>
<path d="M467.10 312.40A2 2.8 0 0 0 467.10 318.00Z" fill="#2e2e2e"/>
<path d="M467.10 329.00A2 2.8 0 0 0 467.10 334.60Z" fill="#2e2e2e"/>
<path d="M542.70 312.40A2 2.8 0 0 1 542.70 318.00Z" fill="#2e2e2e"/>
<rect x="848.90" y="265.30" width="121.00" height="84.00" fill="#6b6a67" />
<rect x="849.90" y="266.30" width="119.00" height="82.00" fill="#ccc8c1" />
<rect x="849.90" y="281.80" width="0.90" height="66.50" fill="#dedbd5" />
<rect x="849.90" y="347.40" width="119.00" height="0.90" fill="#dedbd5" />
<rect x="849.90" y="266.30" width="119.00" height="15.50" fill="#565553" />
<rect x="849.90" y="282.10" width="74.00" height="15.80" fill="#e8e6e1" />
<rect x="849.90" y="298.50" width="74.00" height="15.80" fill="#e8e6e1" />
<rect x="849.90" y="297.90" width="74.00" height="0.60" fill="#d9d6d0" />
<rect x="849.90" y="314.90" width="74.00" height="15.80" fill="#e8e6e1" />
<rect x="849.90" y="314.30" width="74.00" height="0.60" fill="#d9d6d0" />
<text x="882.80" y="277.70" font-size="9.28" font-weight="bold" font-style="normal" font-family='"Liberation Sans",sans-serif' fill="#fff" stroke="#fff" stroke-width="0.25" textLength="52.97" lengthAdjust="spacingAndGlyphs">List.Combine</text>
<text x="852.46" y="293.90" font-size="8.41" font-weight="normal" font-style="normal" font-family='"Liberation Sans",sans-serif' fill="#555555" textLength="67.54" lengthAdjust="spacingAndGlyphs">combineFunction</text>
<text x="852.25" y="311.00" font-size="8.41" font-weight="normal" font-style="normal" font-family='"Liberation Sans",sans-serif' fill="#555555" textLength="16.24" lengthAdjust="spacingAndGlyphs">list0</text>
<text x="852.25" y="327.50" font-size="8.41" font-weight="normal" font-style="normal" font-family='"Liberation Sans",sans-serif' fill="#555555" textLength="16.34" lengthAdjust="spacingAndGlyphs">list1</text>
<rect x="924.40" y="282.10" width="13.20" height="14.30" fill="#e3e0db" />
<rect x="938.00" y="282.10" width="12.90" height="14.30" fill="#e3e0db" />
<rect x="952.00" y="282.10" width="16.90" height="16.80" fill="#e8e6e1" />
<path d="M928.70 289.10H933.30M931.00 286.80V291.40" stroke="#333" stroke-width="0.9"/>
<path d="M943.45 289.60H945.45" stroke="#333" stroke-width="0.9"/>
<text x="955.25" y="293.90" font-size="8.41" font-weight="normal" font-style="normal" font-family='"Liberation Sans",sans-serif' fill="#555555" textLength="11.27" lengthAdjust="spacingAndGlyphs">list</text>
<path d="M849.20 287.80A2 2.8 0 0 0 849.20 293.40Z" fill="#2e2e2e"/>
<path d="M849.20 305.20A2 2.8 0 0 0 849.20 310.80Z" fill="#2e2e2e"/>
<path d="M849.20 321.70A2 2.8 0 0 0 849.20 327.30Z" fill="#2e2e2e"/>
<rect x="826.5" y="352.5" width="165" height="98.8" fill="#ffffff" stroke="#d9d9d9" stroke-width="1"/>
<rect x="827.00" y="433.80" width="164.00" height="1.00" fill="#e2e2e2" />
<text x="837.92" y="363.90" font-size="7.66" font-weight="normal" font-style="normal" font-family='"Liberation Mono",monospace' fill="#6f6f6f" textLength="18.39" lengthAdjust="spacingAndGlyphs">List</text>
<path d="M846.50 370.70L851.00 370.70L848.75 373.50Z" fill="#6c8aa3"/>
<text x="851.78" y="372.50" font-size="6.97" font-weight="normal" font-style="normal" font-family='"Liberation Mono",monospace' fill="#6f6f6f">0</text>
<text x="859.17" y="372.50" font-size="7.20" font-weight="normal" font-style="normal" font-family='"Liberation Mono",monospace' fill="#6f6f6f" textLength="17.29" lengthAdjust="spacingAndGlyphs">List</text>
<path d="M858.20 379.70L861.80 379.70L860.00 382.50Z" fill="#6c8aa3"/>
<text x="862.98" y="381.90" font-size="6.97" font-weight="normal" font-style="normal" font-family='"Liberation Mono",monospace' fill="#6f6f6f">0</text>
<text x="869.87" y="381.90" font-size="7.25" font-weight="normal" font-style="normal" font-family='"Liberation Mono",monospace' fill="#6f6f6f" textLength="17.40" lengthAdjust="spacingAndGlyphs">List</text>
<path d="M846.70 402.30L850.50 402.30L848.60 405.10Z" fill="#6c8aa3"/>
<text x="852.01" y="404.60" font-size="6.97" font-weight="normal" font-style="normal" font-family='"Liberation Mono",monospace' fill="#6f6f6f">1</text>
<text x="858.77" y="404.60" font-size="7.20" font-weight="normal" font-style="normal" font-family='"Liberation Mono",monospace' fill="#6f6f6f" textLength="17.29" lengthAdjust="spacingAndGlyphs">List</text>
<path d="M858.50 411.40L861.80 411.40L860.15 414.20Z" fill="#6c8aa3"/>
<text x="862.98" y="413.30" font-size="6.97" font-weight="normal" font-style="normal" font-family='"Liberation Mono",monospace' fill="#6f6f6f">0</text>
<text x="870.18" y="413.30" font-size="7.16" font-weight="normal" font-style="normal" font-family='"Liberation Mono",monospace' fill="#6f6f6f" textLength="17.18" lengthAdjust="spacingAndGlyphs">List</text>
<path d="M838.60 366.20V428.20" stroke="#a3a3a3" stroke-width="0.9"/>
<circle cx="838.60" cy="428.20" r="1.3" fill="#a3a3a3"/>
<path d="M848.50 375.20V396.30" stroke="#a3a3a3" stroke-width="0.9"/>
<circle cx="848.50" cy="396.30" r="1.3" fill="#a3a3a3"/>
<path d="M848.50 407.30V428.20" stroke="#a3a3a3" stroke-width="0.9"/>
<circle cx="848.50" cy="428.20" r="1.3" fill="#a3a3a3"/>
<path d="M859.50 384.20V396.30" stroke="#a3a3a3" stroke-width="0.9"/>
<circle cx="859.50" cy="396.30" r="1.3" fill="#a3a3a3"/>
<path d="M859.50 416.00V428.20" stroke="#a3a3a3" stroke-width="0.9"/>
<circle cx="859.50" cy="428.20" r="1.3" fill="#a3a3a3"/>
<rect x="874.80" y="387.80" width="9.30" height="5.80" fill="#d8d8d8" />
<text x="877.04" y="393.00" font-size="7.71" font-weight="normal" font-style="normal" font-family='"Liberation Mono",monospace' fill="#9a9a9a" textLength="4.63" lengthAdjust="spacingAndGlyphs">0</text>
<text x="887.45" y="393.00" font-size="6.98" font-weight="normal" font-style="normal" font-family='"Liberation Mono",monospace' fill="#6f6f6f" textLength="46.07" lengthAdjust="spacingAndGlyphs">50PCH-030 C</text>
<rect x="943.30" y="385.40" width="30.90" height="10.00" fill="#d3f2d3" />
<text x="945.14" y="393.30" font-size="7.97" font-weight="normal" font-style="normal" font-family='"Liberation Sans",sans-serif' fill="#5c9a62" textLength="26.59" lengthAdjust="spacingAndGlyphs">978313</text>
<rect x="874.80" y="420.30" width="9.30" height="5.10" fill="#d8d8d8" />
<text x="877.04" y="425.10" font-size="7.71" font-weight="normal" font-style="normal" font-family='"Liberation Mono",monospace' fill="#9a9a9a" textLength="4.63" lengthAdjust="spacingAndGlyphs">0</text>
<text x="887.45" y="425.10" font-size="6.98" font-weight="normal" font-style="normal" font-family='"Liberation Mono",monospace' fill="#6f6f6f" textLength="46.07" lengthAdjust="spacingAndGlyphs">50PCH-030 C</text>
<rect x="943.30" y="417.70" width="30.90" height="9.40" fill="#d3f2d3" />
<text x="945.14" y="425.00" font-size="7.97" font-weight="normal" font-style="normal" font-family='"Liberation Sans",sans-serif' fill="#5c9a62" textLength="26.59" lengthAdjust="spacingAndGlyphs">978313</text>
<text x="833.45" y="444.00" font-size="4.52" font-weight="bold" font-style="normal" font-family='"Liberation Sans",sans-serif' fill="#555" textLength="42.47" lengthAdjust="spacingAndGlyphs">@L4 @L3 @L2 @L1</text>
<text x="976.62" y="445.10" font-size="7.92" font-weight="normal" font-style="italic" font-family='"Liberation Sans",sans-serif' fill="#555" textLength="9.69" lengthAdjust="spacingAndGlyphs">{2}</text>
</svg></body></html>
